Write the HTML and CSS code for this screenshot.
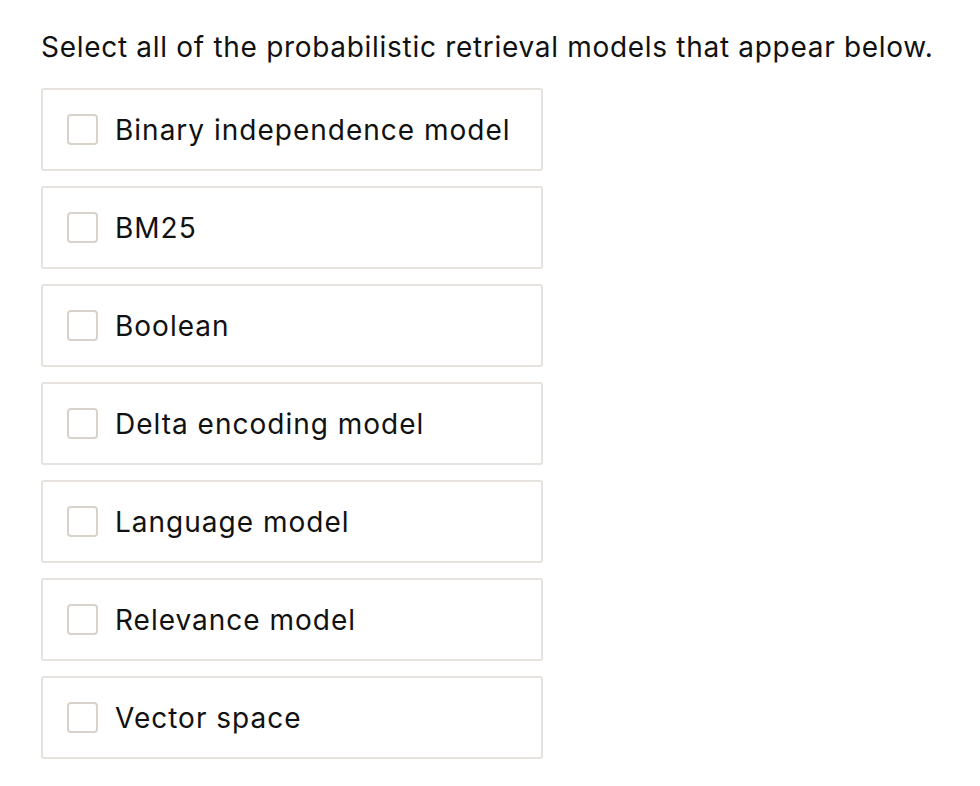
FILE: index.html
```html
<!DOCTYPE html>
<html>
<head>
<meta charset="utf-8">
<link rel="stylesheet" href="styles.css">
</head>
<body>
<div class="page">
  <h1 class="question">Select all of the probabilistic retrieval models that appear below.</h1>
  <ul class="options">
    <li class="option"><span class="check"></span><span class="label">Binary independence model</span></li>
    <li class="option"><span class="check"></span><span class="label">BM25</span></li>
    <li class="option"><span class="check"></span><span class="label">Boolean</span></li>
    <li class="option"><span class="check"></span><span class="label">Delta encoding model</span></li>
    <li class="option"><span class="check"></span><span class="label">Language model</span></li>
    <li class="option"><span class="check"></span><span class="label">Relevance model</span></li>
    <li class="option"><span class="check"></span><span class="label">Vector space</span></li>
  </ul>
</div>
</body>
</html>
```
FILE: styles.css
```css
html, body {
  margin: 0;
  padding: 0;
  background: #ffffff;
}
body {
  font-family: "Inter", "Liberation Sans", sans-serif;
  color: #111111;
}
.page {
  padding: 28px 0 0 41px;
}
.question {
  margin: 0;
  font-size: 28px;
  font-weight: 400;
  line-height: 38px;
  letter-spacing: 0.7px;
  white-space: nowrap;
}
.options {
  list-style: none;
  margin: 22px 0 0 0;
  padding: 0;
  display: flex;
  flex-direction: column;
  gap: 15px;
  width: 502px;
}
.option {
  box-sizing: border-box;
  height: 83px;
  border: 2px solid #e6e2dd;
  border-radius: 3px;
  display: flex;
  align-items: center;
  padding-left: 24px;
}
.check {
  box-sizing: border-box;
  width: 31px;
  height: 31px;
  border: 2px solid #d8d2cb;
  border-radius: 4px;
  flex: none;
}
.label {
  margin-left: 17px;
  font-size: 28px;
  line-height: 34px;
  letter-spacing: 1px;
}
```
